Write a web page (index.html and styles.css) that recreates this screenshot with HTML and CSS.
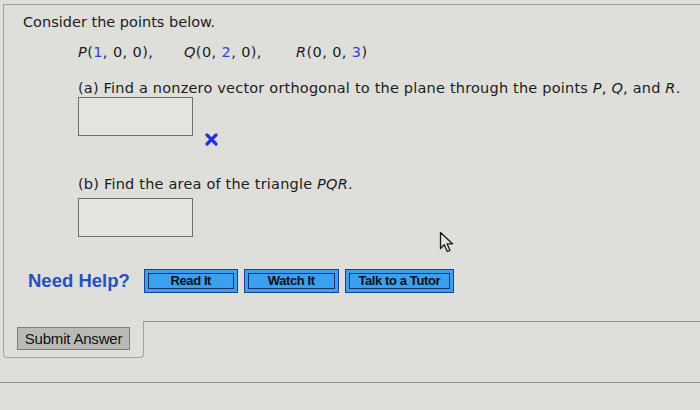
FILE: index.html
```html
<!DOCTYPE html>
<html lang="en">
<head>
    <meta charset="UTF-8">
    <title>Consider the points below</title>
    <link rel="stylesheet" href="styles.css">
</head>
<body>

    <div class="question">
        <p class="intro">Consider the points below.</p>

        <div class="indent">
            <p class="points">
                <span class="pt"><i>P</i>(<span class="num">1</span>, 0, 0),</span>
                <span class="pt"><i>Q</i>(0, <span class="num">2</span>, 0),</span>
                <span class="pt"><i>R</i>(0, 0, <span class="num">3</span>)</span>
            </p>

            <p class="part part-a">(a) Find a nonzero vector orthogonal to the plane through the points <i>P</i>, <i>Q</i>, and <i>R</i>.</p>
            <div class="answer">
                <div class="box"></div>
                <svg class="mark" width="13" height="13" viewBox="0 0 13 13">
                    <path d="M2 2 L11 11 M11 2 L2 11" stroke="#2630d8" stroke-width="3.2" stroke-linecap="round"/>
                </svg>
            </div>

            <p class="part part-b">(b) Find the area of the triangle <i>PQR</i>.</p>
            <div class="answer">
                <div class="box"></div>
            </div>
        </div>

        <div class="help">
            <span class="help-label">Need Help?</span>
            <button class="help-btn read"><span>Read It</span></button>
            <button class="help-btn watch"><span>Watch It</span></button>
            <button class="help-btn tutor"><span>Talk to a Tutor</span></button>
        </div>

        <!-- mouse pointer caught in the shot -->
        <svg class="cursor" width="16" height="23" viewBox="0 0 16 23">
            <path d="M1.5 1.5 L1.5 17.5 L5.2 13.8 L8.3 20.5 L11 19.3 L8 12.8 L13.5 12.8 Z" fill="#e4e4df" stroke="#1a1a1a" stroke-width="1.3" stroke-linejoin="round"/>
        </svg>
    </div>

    <div class="footer">
        <div class="tab">
            <button class="submit">Submit Answer</button>
        </div>
        <div class="filler"></div>
    </div>

    <div class="rule"></div>

</body>
</html>
```

FILE: styles.css
```css
*{
    box-sizing: border-box;
    margin: 0;
    padding: 0;
}

body{
    padding-top: 4px;
    background-color: #dedfda;
    color: #1c1c1c;
    font-family: "DejaVu Sans", Verdana, sans-serif;
    font-size: 14.5px;
    line-height: 16px;
    overflow: hidden;
}

.question{
    position: relative;
    margin-left: 3px;
    padding: 9px 0 28px 19px;
    border-top: 1px solid #a2a3a0;
    border-left: 1px solid #a2a3a0;
}

.indent{
    margin-left: 55px;
}

.points{
    display: flex;
    margin-top: 14px;
    letter-spacing: 0.4px;
}

.pt:nth-child(1){
    width: 106px;
}

.pt:nth-child(2){
    width: 112px;
}

.num{
    color: #3a3fd0;
}

.part{
    letter-spacing: 0.2px;
}

.part-a{
    margin-top: 20px;
}

.part-b{
    margin-top: 40px;
}

.answer{
    display: flex;
    align-items: flex-end;
    margin-top: 1px;
}

.part-b + .answer{
    margin-top: 6px;
}

.box{
    width: 115px;
    height: 39px;
    border: 1px solid #6e6e6c;
    background-color: #e3e4df;
}

.mark{
    margin: 0 0 -10px 12px;
}

.help{
    display: flex;
    align-items: center;
    gap: 6px;
    margin: 32px 0 0 5px;
}

.help-label{
    margin-right: 8px;
    color: #2450c0;
    font-family: "Liberation Sans", Arial, sans-serif;
    font-size: 18.5px;
    font-weight: bold;
}

.help-btn{
    padding: 3px;
    background-color: #3d9ff0;
    border: 1px solid #1d3f93;
    cursor: pointer;
}

.help-btn span{
    display: block;
    border: 1px solid #1c2f6a;
    color: #111;
    font-family: "Liberation Sans", Arial, sans-serif;
    font-size: 13px;
    font-weight: bold;
    letter-spacing: -0.4px;
    line-height: 14px;
}

.read{
    width: 94px;
}

.watch{
    width: 95px;
}

.tutor{
    width: 109px;
}

.cursor{
    position: absolute;
    left: 435px;
    top: 226px;
}

.footer{
    display: flex;
}

.tab{
    width: 141px;
    height: 37px;
    margin-left: 3px;
    padding: 6px 0 0 13px;
    border-left: 1px solid #a2a3a0;
    border-right: 1px solid #a2a3a0;
    border-bottom: 1px solid #a2a3a0;
    border-radius: 0 0 4px 4px;
}

.submit{
    width: 113px;
    height: 23px;
    background-color: #b9bab6;
    border: 1px solid #7d7e7a;
    color: #111;
    font-family: "Liberation Sans", Arial, sans-serif;
    font-size: 15px;
    letter-spacing: -0.2px;
}

.filler{
    flex: 1;
    border-top: 1px solid #8f908c;
}

.rule{
    margin-top: 24px;
    border-top: 1px solid #8f908c;
}
```
